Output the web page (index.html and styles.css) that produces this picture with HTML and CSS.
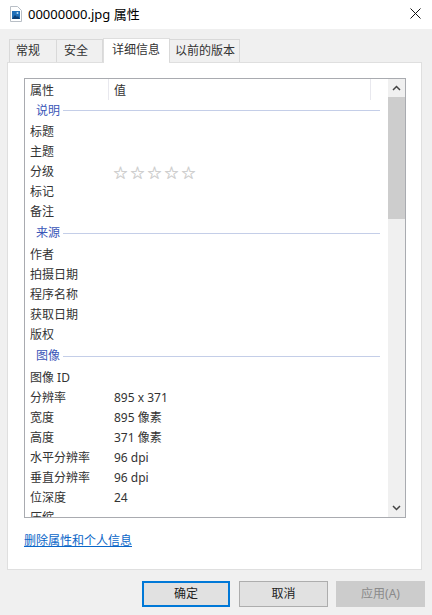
FILE: index.html
```html
<!DOCTYPE html>
<html lang="zh">
<head>
<meta charset="utf-8">
<title>00000000.jpg 属性</title>
<link rel="stylesheet" href="styles.css">
</head>
<body>
<div class="dialog">
  <header class="titlebar">
    <svg class="file-icon" width="12" height="16" viewBox="0 0 12 16">
      <path d="M.5.5h7l4 4v11H.5z" fill="#fff" stroke="#b9bfc6"/>
      <rect x="2" y="5" width="8" height="8" fill="#1f6fb8"/>
      <path d="M2 13l3-4 2 2 1-1 2 3z" fill="#0b3f75"/>
      <circle cx="7.5" cy="7" r="1" fill="#bfe0f5"/>
    </svg>
    <span class="title-text">00000000.jpg 属性</span>
    <svg class="close" width="11" height="11" viewBox="0 0 11 11"><path d="M.5.5l10 10M10.500.5l-10 10" stroke="#111" stroke-width="1" fill="none"/></svg>
  </header>
  <main class="body">
    <nav class="tabs">
      <span class="tab tab-a">常规</span>
      <span class="tab tab-b">安全</span>
      <span class="tab tab-active">详细信息</span>
      <span class="tab tab-c">以前的版本</span>
    </nav>
    <section class="panel">
      <div class="list">
        <div class="content">
          <div class="list-head"><span class="col-name">属性</span><span class="col-value">值</span></div>
          <div class="group group-first"><span>说明</span><i></i></div>
          <div class="row"><span class="k">标题</span></div>
          <div class="row"><span class="k">主题</span></div>
          <div class="row"><span class="k">分级</span><span class="stars">★★★★★</span></div>
          <div class="row"><span class="k">标记</span></div>
          <div class="row"><span class="k">备注</span></div>
          <div class="group"><span>来源</span><i></i></div>
          <div class="row"><span class="k">作者</span></div>
          <div class="row"><span class="k">拍摄日期</span></div>
          <div class="row"><span class="k">程序名称</span></div>
          <div class="row"><span class="k">获取日期</span></div>
          <div class="row"><span class="k">版权</span></div>
          <div class="group"><span>图像</span><i></i></div>
          <div class="row"><span class="k">图像 ID</span></div>
          <div class="row"><span class="k">分辨率</span><span>895 x 371</span></div>
          <div class="row"><span class="k">宽度</span><span>895 像素</span></div>
          <div class="row"><span class="k">高度</span><span>371 像素</span></div>
          <div class="row"><span class="k">水平分辨率</span><span>96 dpi</span></div>
          <div class="row"><span class="k">垂直分辨率</span><span>96 dpi</span></div>
          <div class="row"><span class="k">位深度</span><span>24</span></div>
          <div class="row"><span class="k">压缩</span></div>
        </div>
        <div class="scrollbar">
          <svg class="arrow" width="9" height="6" viewBox="0 0 9 6"><path d="M1 5l3.500-3.500L8 5" stroke="#444" stroke-width="1.500" fill="none"/></svg>
          <div class="thumb"></div>
          <div class="track"></div>
          <svg class="arrow" width="9" height="6" viewBox="0 0 9 6"><path d="M1 1l3.500 3.500L8 1" stroke="#444" stroke-width="1.500" fill="none"/></svg>
        </div>
      </div>
      <a class="link" href="#">删除属性和个人信息</a>
    </section>
    <footer class="buttons">
      <button class="btn btn-default">确定</button>
      <button class="btn btn-cancel">取消</button>
      <button class="btn btn-disabled">应用(A)</button>
    </footer>
  </main>
</div>
</body>
</html>
```
FILE: styles.css
```css
* { box-sizing: border-box; }
html, body { margin: 0; padding: 0; }
body {
  width: 432px;
  height: 615px;
  overflow: hidden;
  font: 12px/20px "Noto Sans", "Noto Sans CJK SC", sans-serif;
  color: #1a1a1a;
  background: #f0f0f0;
}
.dialog { display: flex; flex-direction: column; height: 615px; }
.titlebar {
  height: 29px;
  flex: none;
  background: #fff;
  display: flex;
  align-items: center;
  padding: 0 11px 2px 10px;
}
.file-icon { margin-right: 6px; }
.title-text { font-size: 13px; color: #000; flex: 1; }
.body { flex: 1; padding: 10px 10px 0 7px; display: flex; flex-direction: column; }
.tabs { display: flex; height: 23px; align-items: flex-end; padding-left: 2px; position: relative; z-index: 1; }
.tab {
  height: 23px;
  line-height: 21px;
  border: 1px solid #d9d9d9;
  border-bottom: 0;
  background: #f0f0f0;
  color: #333;
  white-space: nowrap;
}
.tab-a { width: 48px; padding-left: 6px; }
.tab-b { width: 46px; padding-left: 6px; border-left: 0; padding-left: 7px; }
.tab-active {
  width: 67px;
  height: 25px;
  background: #fff;
  line-height: 21px;
  margin-bottom: -1px;
  padding-left: 8px;
  border-color: #dedede;
  border-left-color: #dedede;
}
.tab-c { width: 71px; margin-left: -1px; padding-left: 5px; }
.panel {
  height: 508px;
  background: #fff;
  border: 1px solid #dfdfdf;
  padding: 15px 15px 0 16px;
}
.list {
  height: 440px;
  border: 1px solid #a9abb0;
  display: flex;
  overflow: hidden;
  background: #fff;
}
.content { flex: 1; overflow: hidden; min-width: 0; }
.list-head { height: 21px; display: flex; line-height: 23px; color: #333; }
.col-name { width: 84px; padding-left: 5px; border-right: 1px solid #e8e8ee; }
.col-value { width: 262px; padding-left: 5px; border-right: 1px solid #e8e8ee; }
.group { height: 23px; display: flex; align-items: center; padding: 1px 8px 0 11px; color: #3a56b8; }
.group-first { height: 21px; padding-top: 0; }
.group i { flex: 1; height: 1px; background: #c4cee8; margin-left: 3px; }
.row { height: 20px; display: flex; line-height: 22px; color: #333; white-space: nowrap; }
.k { width: 89px; padding-left: 5px; flex: none; }
.stars { color: #fff; font-size: 13px; letter-spacing: 4px; -webkit-text-stroke: 1px #cfcfcf; }
.scrollbar { width: 17px; flex: none; background: #f0f0f0; display: flex; flex-direction: column; align-items: center; }
.arrow { flex: none; margin: 6px 0; }
.thumb { width: 100%; height: 122px; background: #cdcdcd; }
.track { flex: 1; }
.link { display: block; margin-top: 13px; color: #0a66c8; text-decoration: underline; }
.buttons { display: flex; padding: 11px 0 0 134px; }
.btn {
  flex: none;
  width: 89px;
  height: 26px;
  padding: 0;
  background: #e1e1e1;
  border: 1px solid #adadad;
  font: inherit;
  color: #222;
}
.btn-default { border: 2px solid #0078d7; margin-left: 1px; width: 88px; }
.btn-cancel { margin-left: 9px; }
.btn-disabled { margin-left: 8px; background: #cccccc; border-color: #cccccc; color: #8a8a8a; }
```
